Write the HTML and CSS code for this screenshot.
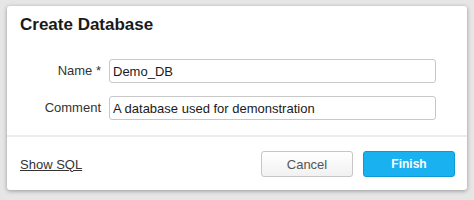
FILE: index.html
```html
<!DOCTYPE html>
<html lang="en">
<head>
    <meta charset="UTF-8">
    <meta name="viewport" content="width=device-width, initial-scale=1.0">
    <title>Create Database</title>
    <link rel="stylesheet" href="styles.css">
</head>
<body>
    <div class="dialog">
        <h1 class="dialog-title">Create Database</h1>

        <div class="form">
            <label class="form-label" for="dbName">Name *</label>
            <input class="form-input" type="text" id="dbName" value="Demo_DB">

            <label class="form-label" for="dbComment">Comment</label>
            <input class="form-input" type="text" id="dbComment" value="A database used for demonstration">
        </div>

        <div class="dialog-footer">
            <a class="show-sql" href="#">Show SQL</a>
            <div class="buttons">
                <button class="btn btn-cancel">Cancel</button>
                <button class="btn btn-finish">Finish</button>
            </div>
        </div>
    </div>
</body>
</html>
```

FILE: styles.css
```css
* {
    margin: 0;
    padding: 0;
    box-sizing: border-box;
}

body {
    font-family: "Liberation Sans", Arial, sans-serif;
    background: #e6e6e6;
    padding: 6px 7px;
    color: #333;
}

.dialog {
    width: 460px;
    height: 184px;
    background: white;
    border-radius: 3px;
    box-shadow: 0 1px 4px rgba(0,0,0,0.35);
}

.dialog-title {
    font-size: 17px;
    font-weight: bold;
    line-height: 20px;
    color: #1a1a1a;
    padding: 9px 13px 0;
}

.form {
    display: grid;
    grid-template-columns: 94px 327px;
    column-gap: 8px;
    row-gap: 13px;
    margin-top: 24px;
    padding-bottom: 15px;
    border-bottom: 2px solid #ececec;
}

.form-label {
    font-size: 13px;
    color: #333;
    text-align: right;
    line-height: 24px;
}

.form-input {
    height: 24px;
    padding: 0 3px;
    border: 1px solid #c8c8c8;
    border-radius: 3px;
    font-family: "Liberation Sans", Arial, sans-serif;
    font-size: 13px;
    color: #1a1a1a;
}

.form-input:focus {
    outline: none;
    border-color: #1ab0f0;
}

.dialog-footer {
    display: flex;
    justify-content: space-between;
    align-items: center;
    padding: 14px 12px 0 13px;
}

.show-sql {
    font-size: 13px;
    color: #333;
    text-decoration: underline;
}

.buttons {
    display: flex;
    gap: 10px;
}

.btn {
    width: 92px;
    height: 26px;
    border-radius: 3px;
    font-family: "Liberation Sans", Arial, sans-serif;
    font-size: 13px;
    cursor: pointer;
}

.btn-cancel {
    background: linear-gradient(#ffffff, #f1f1f1);
    border: 1px solid #c6c6c6;
    color: #555;
}

.btn-finish {
    background: #1ab1f1;
    border: 1px solid #0d98d6;
    color: white;
    font-weight: bold;
    font-size: 12px;
}
```
